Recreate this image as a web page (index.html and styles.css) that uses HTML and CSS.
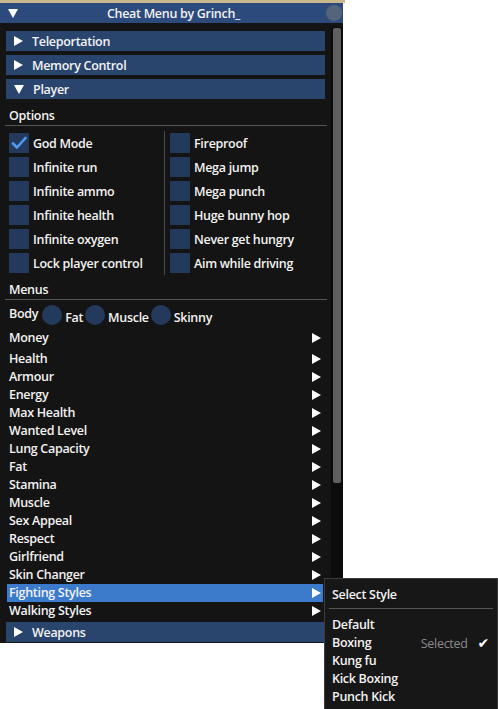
FILE: index.html
```html
<!DOCTYPE html>
<html lang="en">
<head>
    <meta charset="UTF-8">
    <meta name="viewport" content="width=device-width, initial-scale=1.0">
    <title>Cheat Menu</title>
    <link rel="stylesheet" href="styles.css">
</head>
<body>

    <div class="backdrop"></div>

    <div class="window">
        <div class="titlebar">
            <svg class="tri-down" width="10" height="9" viewBox="0 0 10 9"><polygon points="0,0 10,0 5,9" fill="#fff"/></svg>
            <span class="title">Cheat Menu by Grinch_</span>
            <span class="close-dot"></span>
        </div>

        <div class="body">
            <div class="content">
                <div class="header"><svg class="tri" width="9" height="10" viewBox="0 0 9 10"><polygon points="0,0 9,5 0,10" fill="#fff"/></svg>Teleportation</div>
                <div class="header"><svg class="tri" width="9" height="10" viewBox="0 0 9 10"><polygon points="0,0 9,5 0,10" fill="#fff"/></svg>Memory Control</div>
                <div class="header"><svg class="tri" width="10" height="9" viewBox="0 0 10 9"><polygon points="0,0 10,0 5,9" fill="#fff"/></svg>Player</div>

                <div class="section">
                    <div class="label">Options</div>
                    <div class="sep"></div>

                    <div class="options">
                        <div class="col">
                            <div class="check"><span class="box on"><svg width="16" height="14" viewBox="0 0 16 14"><path d="M2 7.5 L6 11.5 L14.5 2" fill="none" stroke="#4f9cf0" stroke-width="2.6" stroke-linecap="round" stroke-linejoin="round"/></svg></span>God Mode</div>
                            <div class="check"><span class="box"></span>Infinite run</div>
                            <div class="check"><span class="box"></span>Infinite ammo</div>
                            <div class="check"><span class="box"></span>Infinite health</div>
                            <div class="check"><span class="box"></span>Infinite oxygen</div>
                            <div class="check"><span class="box"></span>Lock player control</div>
                        </div>
                        <div class="col col-right">
                            <div class="check"><span class="box"></span>Fireproof</div>
                            <div class="check"><span class="box"></span>Mega jump</div>
                            <div class="check"><span class="box"></span>Mega punch</div>
                            <div class="check"><span class="box"></span>Huge bunny hop</div>
                            <div class="check"><span class="box"></span>Never get hungry</div>
                            <div class="check"><span class="box"></span>Aim while driving</div>
                        </div>
                    </div>

                    <div class="label">Menus</div>
                    <div class="sep"></div>

                    <div class="radios">
                        <span class="radio-title">Body</span>
                        <span class="radio"></span><span class="radio-text">Fat</span>
                        <span class="radio"></span><span class="radio-text">Muscle</span>
                        <span class="radio"></span><span class="radio-text">Skinny</span>
                    </div>

                    <div class="item first">Money<span class="arrow"></span></div>
                    <div class="list">
                        <div class="item">Health<span class="arrow"></span></div>
                        <div class="item">Armour<span class="arrow"></span></div>
                        <div class="item">Energy<span class="arrow"></span></div>
                        <div class="item">Max Health<span class="arrow"></span></div>
                        <div class="item">Wanted Level<span class="arrow"></span></div>
                        <div class="item">Lung Capacity<span class="arrow"></span></div>
                        <div class="item">Fat<span class="arrow"></span></div>
                        <div class="item">Stamina<span class="arrow"></span></div>
                        <div class="item">Muscle<span class="arrow"></span></div>
                        <div class="item">Sex Appeal<span class="arrow"></span></div>
                        <div class="item">Respect<span class="arrow"></span></div>
                        <div class="item">Girlfriend<span class="arrow"></span></div>
                        <div class="item">Skin Changer<span class="arrow"></span></div>
                        <div class="item hover">Fighting Styles<span class="arrow"></span></div>
                        <div class="item">Walking Styles<span class="arrow"></span></div>
                    </div>
                </div>

                <div class="header last"><svg class="tri" width="9" height="10" viewBox="0 0 9 10"><polygon points="0,0 9,5 0,10" fill="#fff"/></svg>Weapons</div>
            </div>

            <div class="scrollbar"><div class="thumb"></div></div>
        </div>
    </div>

    <!-- popup opened from "Fighting Styles" -->
    <div class="popup">
        <div class="label">Select Style</div>
        <div class="sep"></div>
        <div class="pop-item">Default</div>
        <div class="pop-item">Boxing<span class="selected">Selected<span class="tick">&#10004;</span></span></div>
        <div class="pop-item">Kung fu</div>
        <div class="pop-item">Kick Boxing</div>
        <div class="pop-item">Punch Kick</div>
    </div>

</body>
</html>
```

FILE: styles.css
```css
body {
    font-family: 'Open Sans', 'DejaVu Sans', sans-serif;
    font-size: 12.5px;
    font-weight: 600;
    letter-spacing: -0.3px;
    color: #f2f2f2;
    background-color: #ffffff;
    margin: 0;
    padding: 0;
    position: relative;
    min-height: 709px;
    overflow: hidden;
}

.backdrop {
    height: 3px;
    width: 345px;
    background-color: #c9b88e;
}

.window {
    width: 343px;
    background-color: #151414;
}

.titlebar {
    height: 20px;
    background-color: #2d4a7c;
    display: grid;
    grid-template-columns: 24px 1fr 24px;
    align-items: center;
}

.tri-down {
    margin-left: 8px;
}

.title {
    text-align: center;
    padding-left: 4px;
}

.close-dot {
    width: 16px;
    height: 16px;
    border-radius: 50%;
    background-color: #56647a;
    justify-self: end;
    margin-right: 1px;
}

.body {
    display: flex;
    padding-top: 8px;
    padding-left: 6px;
}

.content {
    width: 319px;
}

.header {
    height: 20px;
    margin-bottom: 4px;
    background-color: #2a456d;
    display: flex;
    align-items: center;
}

.header .tri {
    margin-left: 8px;
    margin-right: 9px;
}

.header.last {
    margin-top: 2px;
    margin-bottom: 1px;
}

.section {
    padding-top: 3px;
    padding-left: 3px;
}

.label {
    height: 19px;
    line-height: 20px;
}

.sep {
    height: 1px;
    background-color: #555555;
    margin-left: -4px;
    margin-right: -2px;
}

.options {
    display: flex;
    margin-top: 5px;
    margin-bottom: 5px;
}

.col {
    width: 157px;
    display: flex;
    flex-direction: column;
    gap: 4px;
    padding: 2px 0;
}

.col-right {
    border-left: 1px solid #4a4a4a;
    padding-left: 5px;
}

.check {
    display: flex;
    align-items: center;
    height: 20px;
}

.box {
    width: 20px;
    height: 20px;
    background-color: #233a5d;
    margin-right: 4px;
    display: flex;
    align-items: center;
    justify-content: center;
}

.radios {
    display: flex;
    align-items: center;
    height: 20px;
    margin-top: 5px;
}

.radio-title {
    margin-top: -3px;
    margin-right: 4px;
}

.radio {
    width: 20px;
    height: 20px;
    border-radius: 50%;
    background-color: #233a5d;
    margin-right: 3px;
}

.radio-text {
    margin-right: 2px;
    margin-top: 4px;
}

.item {
    height: 18px;
    line-height: 20px;
    display: flex;
    justify-content: space-between;
    align-items: center;
    margin-right: 2px;
}

.item.first {
    margin-top: 4px;
    margin-bottom: 3px;
}

.item.hover {
    background-color: #3c7bcc;
    margin-left: -2px;
    padding-left: 2px;
}

.arrow {
    width: 0;
    height: 0;
    border-top: 5px solid transparent;
    border-bottom: 5px solid transparent;
    border-left: 9px solid #ffffff;
    margin-right: 2px;
}

.scrollbar {
    width: 10px;
    margin-left: 6px;
    background-color: #0c0c0c;
    padding: 1px 2px;
    margin-top: -4px;
}

.thumb {
    height: 455px;
    background-color: #606060;
    border-radius: 2px;
}

.popup {
    position: absolute;
    left: 324px;
    top: 578px;
    width: 164px;
    height: 140px;
    padding: 4px 4px 0 4px;
    background-color: #181717;
    border: 1px solid #3c3c3c;
}

.popup .label {
    margin-top: 2px;
    padding-left: 3px;
}

.popup .sep {
    margin: 4px 0 6px 0;
}

.pop-item {
    height: 18px;
    line-height: 19px;
    padding-left: 3px;
    display: flex;
    justify-content: space-between;
}

.selected {
    color: #8b8b8b;
    font-weight: 400;
}

.tick {
    color: #ffffff;
    font-size: 14px;
    margin-left: 10px;
    margin-right: 4px;
}
```
